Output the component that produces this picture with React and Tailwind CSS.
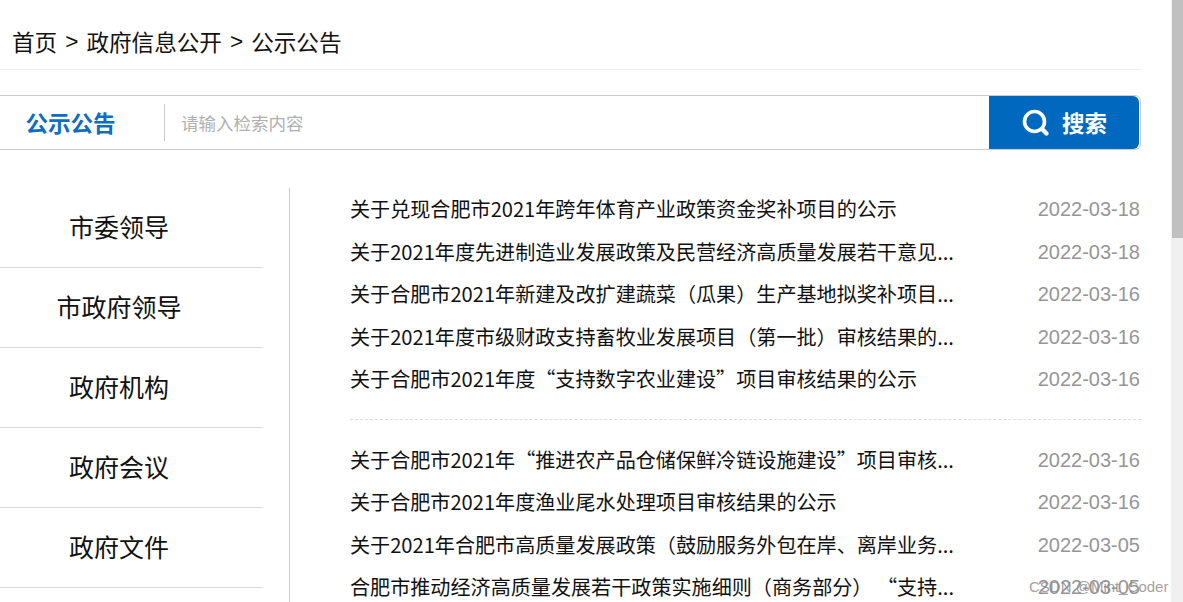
const side = ["市委领导", "市政府领导", "政府机构", "政府会议", "政府文件"];
const g1 = [
  ["关于兑现合肥市2021年跨年体育产业政策资金奖补项目的公示", "2022-03-18"],
  ["关于2021年度先进制造业发展政策及民营经济高质量发展若干意见...", "2022-03-18"],
  ["关于合肥市2021年新建及改扩建蔬菜（瓜果）生产基地拟奖补项目...", "2022-03-16"],
  ["关于2021年度市级财政支持畜牧业发展项目（第一批）审核结果的...", "2022-03-16"],
  ["关于合肥市2021年度“支持数字农业建设”项目审核结果的公示", "2022-03-16"],
];
const g2 = [
  ["关于合肥市2021年“推进农产品仓储保鲜冷链设施建设”项目审核...", "2022-03-16"],
  ["关于合肥市2021年度渔业尾水处理项目审核结果的公示", "2022-03-16"],
  ["关于2021年合肥市高质量发展政策（鼓励服务外包在岸、离岸业务...", "2022-03-05"],
  ["合肥市推动经济高质量发展若干政策实施细则（商务部分） “支持...", "2022-03-05"],
];
const cjk = "font-['Microsoft_YaHei','Noto_Sans_CJK_SC',sans-serif]";

function Row({ t, d }) {
  return (
    <div className="flex h-[42.5px] items-center justify-between pr-[1px]">
      <span className="text-[20.1px] leading-[28px] text-[#111] whitespace-nowrap">{t}</span>
      <span className="font-['Liberation_Sans',sans-serif] text-[20px] leading-[28px] text-[#969696]">{d}</span>
    </div>
  );
}

export default function App() {
  return (
    <div className={`relative flex h-[602px] w-[1183px] overflow-hidden bg-white ${cjk}`}>
      <div className="w-[1171px] shrink-0 pr-[30px]">
        <div className="flex h-[70px] items-end gap-[8px] border-b border-[#eee] pb-[10px] pl-[12px] text-[22.6px] leading-[34px] text-[#111]">
          <span>首页</span>
          <span className="font-['Liberation_Sans',sans-serif]">&gt;</span>
          <span>政府信息公开</span>
          <span className="font-['Liberation_Sans',sans-serif]">&gt;</span>
          <span>公示公告</span>
        </div>
        <div className="mt-[25px] flex h-[55px] items-center rounded-r-[6px] border-y border-r border-[#ccc]">
          <div className="w-[164px] shrink-0 pl-[25.5px] text-[22.5px] font-bold text-[#0f6cbf]">公示公告</div>
          <div className="flex h-[37px] flex-1 items-center border-l border-[#ccc] pl-[16px] pt-[1px] text-[17.5px] text-[#b0b0b0]">请输入检索内容</div>
          <div className="mr-[1px] flex h-[53px] w-[150px] items-center gap-[12px] rounded-r-[6px] bg-[#0069bf] pl-[33px] text-[22.5px] font-bold text-white">
            <svg width="28" height="28" viewBox="0 0 28 28" fill="none" stroke="white" strokeLinecap="round" className="shrink-0">
              <circle cx="12.5" cy="12.5" r="10" strokeWidth="3.6" />
              <path d="M20 20l4.5 4.5" strokeWidth="4.4" />
            </svg>
            <span>搜索</span>
          </div>
        </div>
        <div className="mt-[38px] flex">
          <div className="w-[263px] shrink-0">
            {side.map((s) => (
              <div key={s} className="flex h-[80px] items-center justify-center border-b border-[#d9d9d9] pb-[2px] pr-[25px] text-[25px] leading-none text-[#111]">{s}</div>
            ))}
          </div>
          <div className="ml-[26px] flex-1 border-l border-[#ccc] pl-[60px]">
            {g1.map(([t, d]) => <Row key={t} t={t} d={d} />)}
            <div className="mb-[19px] mt-[18px] border-b border-dashed border-[#ddd]" />
            {g2.map(([t, d]) => <Row key={t} t={t} d={d} />)}
          </div>
        </div>
      </div>
      <div className="flex h-full w-[12px] flex-col bg-[#f0f0f0]">
        <div className="ml-[1px] h-[238px] bg-[#c0c0c0]" />
      </div>
      <div className="absolute left-[1029px] top-[578px] font-['Liberation_Sans',sans-serif] text-[15px] leading-[18px] text-[#888]/80">CSDN @Mint_Coder</div>
    </div>
  );
}
